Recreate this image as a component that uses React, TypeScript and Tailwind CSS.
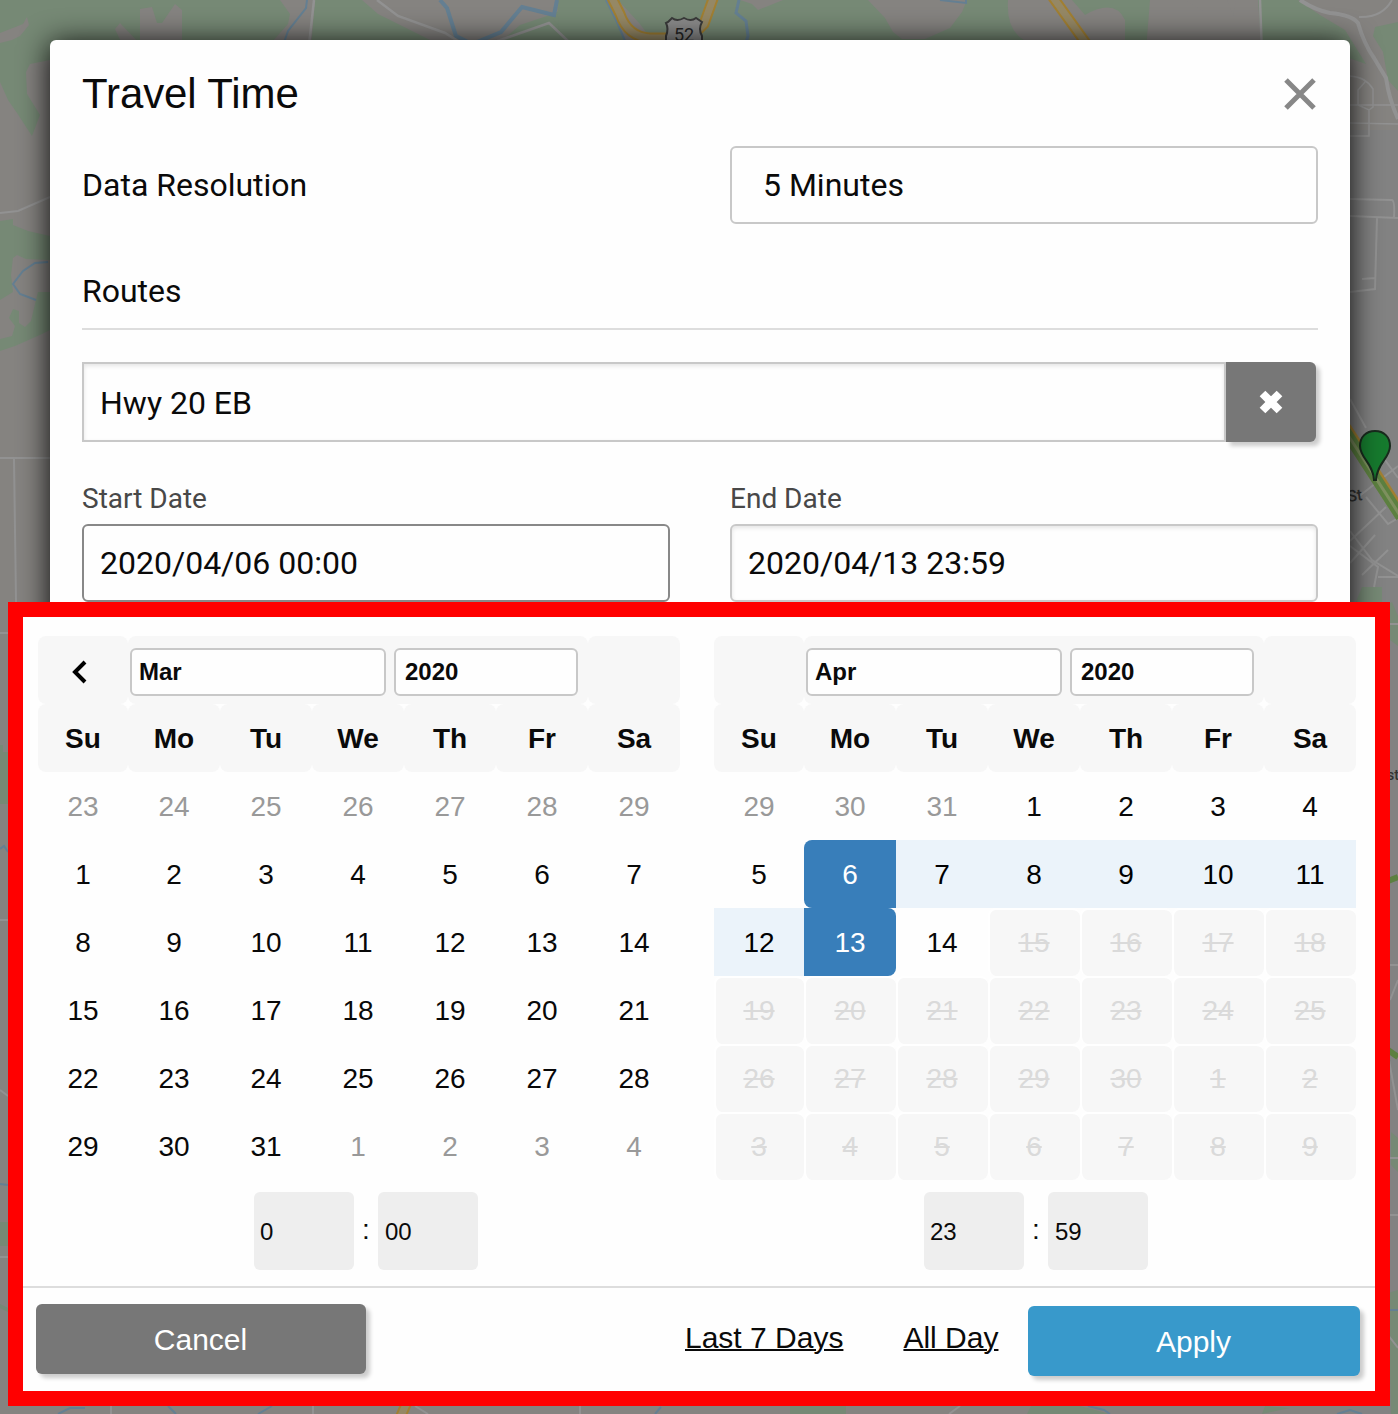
type CellState = 'normal' | 'muted' | 'disabled' | 'start' | 'end' | 'range'

type Day = { label: number; state: CellState }

const WEEKDAYS = ['Su', 'Mo', 'Tu', 'We', 'Th', 'Fr', 'Sa']

const COLUMNS = 'grid grid-cols-[90px_repeat(6,92px)] auto-rows-[68px]'

const CELL_STYLES: Record<CellState, string> = {
  normal: 'pt-[2px] text-[#080808]',
  muted: 'pt-[2px] text-[#999999]',
  disabled:
    'rounded-lg border-t-2 border-l-2 border-white bg-[#f7f7f7] pr-[2px] text-[#dadada] line-through',
  start: 'rounded-l-lg bg-[#387eba] pt-[2px] text-white',
  end: 'rounded-r-lg bg-[#387eba] pt-[2px] text-white',
  range: 'bg-[#ebf3fa] pt-[2px] text-black',
}

function days(from: number, to: number, state: CellState): Day[] {
  return Array.from({ length: to - from + 1 }, (_, i) => ({ label: from + i, state }))
}

const MARCH = [...days(23, 29, 'muted'), ...days(1, 31, 'normal'), ...days(1, 4, 'muted')]

const APRIL = [
  ...days(29, 31, 'muted'),
  ...days(1, 5, 'normal'),
  ...days(6, 6, 'start'),
  ...days(7, 12, 'range'),
  ...days(13, 13, 'end'),
  ...days(14, 14, 'normal'),
  ...days(15, 30, 'disabled'),
  ...days(1, 9, 'disabled'),
]

function Map() {
  return (
    <svg className="absolute inset-0" width="1398" height="1414" viewBox="0 0 1398 1414" fill="none">
      <rect width="1398" height="1414" fill="#858380" />
      <rect x="1340" y="130" width="58" height="1284" fill="#828282" />
      {/* Parks */}
      <g fill="#768975">
        <path d="M0 0H280L290 14L288 24L272 42L262 60H50L30 64L26 72L27 94L40 115L32 136L17 113L8 100L0 82Z" />
        <path d="M315 0H362L378 14L440 45L470 50L505 40L560 10V60H310Z" />
        <path d="M520 25L550 15L562 30L560 60H480Z" />
        <path d="M557 0H606L616 20L629 50H560Z" />
        <path d="M618 0H740L752 4L758 10L783 0H868L885 18L893 32L902 39H925L950 28L962 12L967 0H1008Q1006 30 1024 40H650L628 20Z" />
        <path d="M1072 0H1150L1146 50H1125V20Q1115 -2 1085 15Z" />
        <path d="M1258 0H1298L1320 15L1345 30L1366 64L1340 55L1262 55Z" />
        <path d="M1375 27L1398 22V91L1388 80L1383 52L1373 36Z" />
        <path d="M0 221L13 219L13 225L28 231L50 236V330L42 334L15 346L0 351V339L12 336L15 326L9 318L13 309L19 311L19 323L25 327L31 321L35 304L38 292H50V260L26 259L17 255L13 258L11 275L13 292L0 300Z" />
        <path d="M0 745H3V752H8V804H0ZM0 1222H8V1246H0Z" />
        <path d="M0 1304L8 1308V1312L0 1308ZM790 1406H846V1414H790ZM1031 1406H1080L1110 1414H1027ZM1265 1406L1290 1408L1262 1414Z" />
        <path d="M1388 604L1392 602L1398 616V646L1390 640ZM1391 1132L1398 1138V1172L1391 1165ZM1388 1293L1398 1290V1414H1391ZM1362 587H1382V604H1355Z" />
      </g>
      <g fill="#858380">
        <path d="M0 33L23 24L27 17L29 25L20 36L12 40L0 43Z" />
        <path d="M115 29L120 23L140 44H122ZM140 9L152 7L157 23H162L175 4L182 10V44H140Z" />
        <path d="M606 0H618L640 24L652 40H632L618 18Z" />
        <path d="M1184 0H1204V12ZM1227 0H1236L1233 16Z" />
      </g>
      {/* Water */}
      <g stroke="#647f92">
        <path d="M307 0L306 8L288 31L280 54" strokeWidth="2" />
        <path d="M440 0L447 8L456 36L472 44L501 32L522 7L554 15L557 0" strokeWidth="4" />
        <path d="M606 0L616 20L629 50" strokeWidth="2" />
        <path d="M739 0L736 13L746 21L748 36L742 54" strokeWidth="3" />
        <path d="M940 0L966 3V0M48 262L35 263L23 271L13 284L20 294L36 300" strokeWidth="2" />
        <path d="M0 849L4 846L8 852M0 1184L8 1185M58 1414L70 1408H85M168 1406L176 1414M272 1406L258 1414M655 1414L661 1407M1088 1406L1104 1410L1110 1414M1337 1414L1350 1410L1362 1414M1390 1310H1398" strokeWidth="2" />
      </g>
      {/* Streets */}
      <g stroke="#929292">
        <path d="M314 0L308 54M377 0L398 16L445 33L472 50L549 23L570 43L588 54M1260 0L1262 54" strokeWidth="2.5" />
        <path d="M1300 0Q1315 10 1330 13Q1352 15 1358 23Q1364 44 1374 58L1386 78Q1389 99 1398 119" strokeWidth="4" />
        <path d="M1359 17Q1382 18 1392 0" strokeWidth="2" />
        <path d="M0 213L18 211L50 197M0 458H50M14 458L16 602M0 633H8M0 920H8M0 1090L8 1096M0 1257H8M111 1406V1414M313 1406V1414" strokeWidth="2" />
        <path d="M1350 76Q1366 77 1373 89V107L1369 110L1358 105V90L1365 82M1350 105H1398M1350 123L1398 124M1369 110V136H1350" strokeWidth="1.5" />
        <path d="M1350 199L1392 200Q1395 201 1394 217M1350 216L1398 218M1377 218L1375 289L1350 292M1375 278L1362 279" strokeWidth="2" />
        <path d="M1350 399L1366 428M1385 460L1398 478M1398 466L1358 497M1366 497L1388 524L1398 518M1386 507L1350 541M1350 531L1372 560L1398 576M1350 563L1375 535M1362 575L1388 550M1378 577H1398M1350 546L1378 567L1374 587M1388 624H1398M1390 965H1398M1390 1000L1398 980M1388 1055L1398 1110M1390 1158H1398M1390 1215H1398M1388 1335L1398 1348M960 1406L949 1414M415 1406L428 1414M580 1406V1414" strokeWidth="2" />
      </g>
      {/* Highways */}
      <g>
        <path d="M611 -4L620 14Q628 37 650 38L690 38L704 24L714 -4" stroke="#a17f32" strokeWidth="11" />
        <path d="M611 -4L620 14Q628 37 650 38L690 38L704 24L714 -4" stroke="#958865" strokeWidth="7" />
        <path d="M1052 -4L1098 60M408 1400L400 1418" stroke="#a17f32" strokeWidth="11" />
        <path d="M1052 -4L1098 60M408 1400L400 1418" stroke="#958865" strokeWidth="7" />
        <path d="M1345 428L1402 516" stroke="#a17f32" strokeWidth="13" />
        <path d="M1344 429L1401 517" stroke="#5c8040" strokeWidth="11" />
        <path d="M1344 429L1401 517" stroke="#7e905f" strokeWidth="3" />
        <path d="M1388 881L1398 877M1388 1050L1398 1057" stroke="#5c8040" strokeWidth="6" />
      </g>
      {/* US route shield */}
      <path
        d="M668 22L672 18Q677 22 684 18Q691 22 696 18L702 22Q698 29 702 36V50H666V36Q669 29 666 23Z"
        fill="#8b8b8b"
        stroke="#3a3a3a"
        strokeWidth="2"
      />
      <text x="684" y="41" textAnchor="middle" fontSize="18" fill="#252525" fontFamily="Roboto, sans-serif">52</text>
      <text x="1348" y="502" fontSize="16" fill="#333333" fontFamily="Roboto, sans-serif" fontWeight="500" transform="rotate(-8 1348 502)">St</text>
      <text x="1387" y="780" fontSize="14" fill="#333333" fontFamily="Roboto, sans-serif" fontWeight="500">st</text>
      {/* Route marker */}
      <path
        d="M1375 431C1366 431 1360 437 1360 446C1360 458 1373 463 1374 480H1376C1377 463 1390 458 1390 446C1390 437 1384 431 1375 431Z"
        fill="#167a2e"
        stroke="#182b1d"
        strokeWidth="2"
      />
    </svg>
  )
}

function DateField({ label, value, active }: { label: string; value: string; active?: boolean }) {
  return (
    <div className="w-[588px]">
      <div className="text-[28px] leading-[36px] text-[#484848]">{label}</div>
      <div
        className={`mt-[7px] flex h-[78px] items-center rounded-md border-2 px-4 ${
          active ? 'border-[#888888]' : 'border-[#c8c8c8] shadow-[inset_0_2px_4px_rgba(0,0,0,0.1)]'
        }`}
      >
        {value}
      </div>
    </div>
  )
}

function TravelTimeDialog() {
  return (
    <div className="relative ml-[50px] h-[1300px] w-[1300px] rounded-md bg-[#fefefe] px-8 text-[32px] text-[#0a0a0a] shadow-[0_3px_30px_rgba(0,0,0,0.95)]">
      <div className="flex h-[106px] items-center justify-between">
        <h1 className="font-['Liberation_Sans',sans-serif] text-[42px] tracking-[-0.1px]">Travel Time</h1>
        <svg className="mr-[2px] mt-[1px]" width="32" height="32" viewBox="0 0 32 32" stroke="#878787" strokeWidth="5">
          <path d="M2 2L30 30M30 2L2 30" />
        </svg>
      </div>
      <div className="flex h-[78px] items-center justify-between">
        <span>Data Resolution</span>
        <div className="flex h-[78px] w-[588px] items-center rounded-md border-2 border-[#c8c8c8] px-[31px]">
          5 Minutes
        </div>
      </div>
      <h2 className="mt-[42px] h-[64px] border-b-2 border-[#dddddd] pt-[1px] leading-[48px]">Routes</h2>
      <div className="mt-8 flex h-20 w-[1234px]">
        <div className="flex flex-1 items-center border-2 border-[#c8c8c8] px-4 pt-[2px] shadow-[inset_0_2px_4px_rgba(0,0,0,0.1)]">
          Hwy 20 EB
        </div>
        <button className="flex w-[90px] items-center justify-center rounded-r-md bg-[#777777] shadow-[4px_4px_4px_rgba(0,0,0,0.2)]">
          <svg width="24" height="24" viewBox="0 0 24 24" stroke="white" strokeWidth="8">
            <path d="M3.5 3.5L20.5 20.5M20.5 3.5L3.5 20.5" />
          </svg>
        </button>
      </div>
      <div className="mt-[39px] flex justify-between">
        <DateField label="Start Date" value="2020/04/06 00:00" active />
        <DateField label="End Date" value="2020/04/13 23:59" />
      </div>
    </div>
  )
}

function Calendar({ month, cells, hasPrev }: { month: string; cells: Day[]; hasPrev?: boolean }) {
  return (
    <div className="w-[642px] text-[28px] text-[#0a0a0a]">
      <div className="flex h-[68px] text-2xl font-bold">
        <div className="flex w-[90px] items-center justify-center rounded-lg bg-[#f7f7f7]">
          {hasPrev && (
            <svg className="mr-2 mt-1" width="16" height="24" viewBox="0 0 16 24" fill="none" stroke="black" strokeWidth="4">
              <path d="M14 2L4 12L14 22" />
            </svg>
          )}
        </div>
        <div className="flex w-[460px] items-center gap-2 rounded-lg bg-[#f7f7f7] pt-1 pl-[2px]">
          <div className="flex h-12 w-64 items-center rounded-md border-2 border-[#c8c8c8] bg-[#fefefe] pl-[7px]">{month}</div>
          <div className="flex h-12 w-[184px] items-center rounded-md border-2 border-[#c8c8c8] bg-[#fefefe] pl-[9px]">2020</div>
        </div>
        <div className="w-[92px] rounded-lg bg-[#f7f7f7]" />
      </div>
      <div className={COLUMNS}>
        {WEEKDAYS.map((day) => (
          <div key={day} className="flex items-center justify-center rounded-lg bg-[#f7f7f7] pt-[2px] font-bold">
            {day}
          </div>
        ))}
        {cells.map((cell, i) => (
          <div key={i} className={`flex items-center justify-center ${CELL_STYLES[cell.state]}`}>
            {cell.label}
          </div>
        ))}
      </div>
    </div>
  )
}

function TimeInput({ hour, minute }: { hour: string; minute: string }) {
  return (
    <div className="flex h-[78px] items-center text-2xl text-[#0a0a0a]">
      <div className="flex h-full w-[100px] items-center rounded-md bg-[#eeeeee] pl-[6px] pt-[2px]">{hour}</div>
      <span className="w-6 pb-[3px] text-center text-[28px]">:</span>
      <div className="flex h-full w-[100px] items-center rounded-md bg-[#eeeeee] pl-[7px] pt-[2px]">{minute}</div>
    </div>
  )
}

function DateRangePicker() {
  return (
    <div className="absolute top-[602px] left-2 h-[804px] w-[1382px] border-[15px] border-[#ff0000] bg-[#fefefe] font-['Liberation_Sans',Arial,sans-serif]">
      <div className="flex gap-[34px] pt-[19px] pl-[15px]">
        <Calendar month="Mar" cells={MARCH} hasPrev />
        <Calendar month="Apr" cells={APRIL} />
      </div>
      <div className="mt-3 flex gap-[446px] pl-[231px]">
        <TimeInput hour="0" minute="00" />
        <TimeInput hour="23" minute="59" />
      </div>
      <div className="mt-4 flex items-start border-t-2 border-[#dddddd] pt-4 pl-[13px] text-[30px] text-[#0a0a0a]">
        <button className="h-[70px] w-[330px] rounded-md bg-[#777777] pr-[1px] text-white shadow-[4px_4px_4px_rgba(0,0,0,0.2)]">
          Cancel
        </button>
        <a className="ml-[319px] leading-[68px] underline decoration-2">Last 7 Days</a>
        <a className="ml-[60px] leading-[68px] underline decoration-2">All Day</a>
        <button className="mt-[2px] ml-auto mr-[15px] h-[70px] w-[332px] rounded-md bg-[#3899cb] pr-[1px] text-white shadow-[4px_4px_4px_rgba(0,0,0,0.2)]">
          Apply
        </button>
      </div>
    </div>
  )
}

export default function App() {
  return (
    <div className="relative h-[1414px] w-[1398px] overflow-hidden pt-10 font-[Roboto,sans-serif]">
      <Map />
      <TravelTimeDialog />
      <DateRangePicker />
    </div>
  )
}
